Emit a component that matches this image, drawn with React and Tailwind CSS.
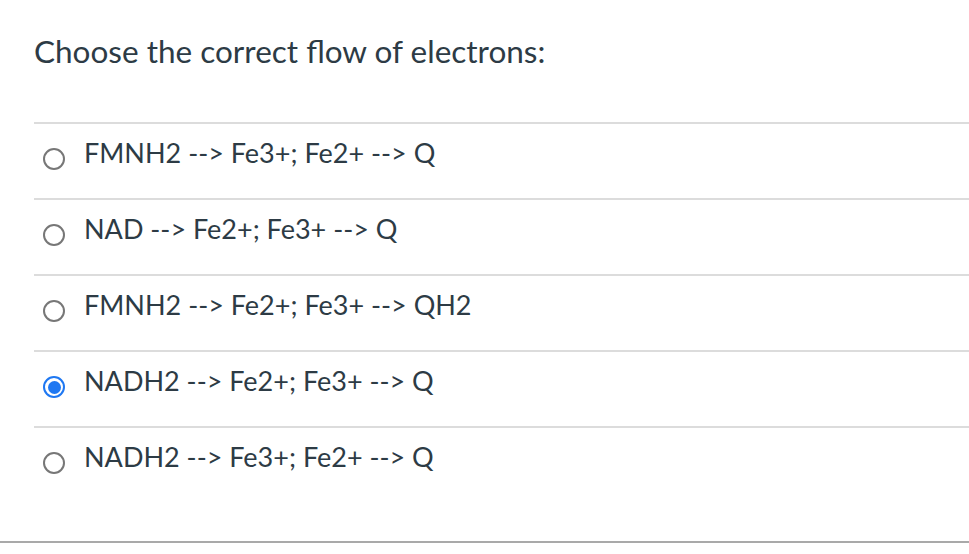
import React from "react";

const options = [
  { label: "FMNH2 --> Fe3+; Fe2+ --> Q", checked: false },
  { label: "NAD --> Fe2+; Fe3+ --> Q", checked: false },
  { label: "FMNH2 --> Fe2+; Fe3+ --> QH2", checked: false },
  { label: "NADH2 --> Fe2+; Fe3+ --> Q", checked: true },
  { label: "NADH2 --> Fe3+; Fe2+ --> Q", checked: false },
];

function Radio({ checked }) {
  if (checked) {
    return (
      <div className="w-[22px] h-[22px] mt-[11px] shrink-0 rounded-full border-2 border-[#1f78f2] bg-white flex items-center justify-center">
        <div className="w-[13px] h-[13px] rounded-full bg-[#1f78f2]" />
      </div>
    );
  }
  return (
    <div className="w-[22px] h-[22px] mt-[11px] shrink-0 rounded-full border-2 border-[#777777] bg-white" />
  );
}

export default function App() {
  return (
    <div
      className="w-[969px] h-[554px] bg-white text-[#2d3b45] overflow-hidden"
      style={{ fontFamily: "Lato, 'Liberation Sans', sans-serif" }}
    >
      <div className="pl-[34px] pt-[32px]">
        <h1 className="text-[31.5px] leading-[38px] font-normal">
          Choose the correct flow of electrons:
        </h1>
        <div className="mt-[52px]">
          {options.map((o, i) => (
            <div
              key={i}
              className="border-t-2 border-[#dcdcdc] h-[76px] pt-[13px] pl-[9px] flex items-start gap-[19px]"
            >
              <Radio checked={o.checked} />
              <span className="text-[27px] leading-[32px]">{o.label}</span>
            </div>
          ))}
        </div>
      </div>
      <div className="mt-[39px] border-t-2 border-[#a9a9a9]" />
    </div>
  );
}
